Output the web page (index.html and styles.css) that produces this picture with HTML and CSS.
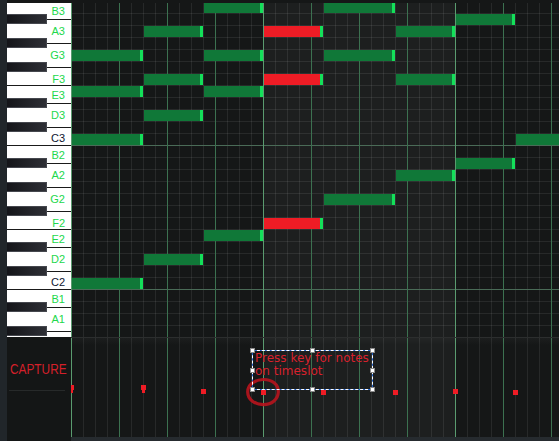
FILE: index.html
```html
<!DOCTYPE html>
<html>
<head>
<meta charset="utf-8">
<link rel="stylesheet" href="styles.css">
</head>
<body>
<div class="app">
  <div class="strip"></div>
  <div class="main">
    <div class="roll">
      <div class="keys">
        <div class="k first"><div class="lbl first-l">B3</div></div>
        <div class="k blk"><div class="bk"></div></div>
        <div class="k"><div class="lbl">A3</div></div>
        <div class="k blk"><div class="bk"></div></div>
        <div class="k"><div class="lbl">G3</div></div>
        <div class="k blk"><div class="bk"></div></div>
        <div class="k"><div class="lbl">F3</div></div>
        <div class="k sep"><div class="lbl low">E3</div></div>
        <div class="k blk"><div class="bk"></div></div>
        <div class="k"><div class="lbl">D3</div></div>
        <div class="k blk"><div class="bk"></div></div>
        <div class="k"><div class="lbl c">C3</div></div>
        <div class="k sep"><div class="lbl low">B2</div></div>
        <div class="k blk"><div class="bk"></div></div>
        <div class="k"><div class="lbl">A2</div></div>
        <div class="k blk"><div class="bk"></div></div>
        <div class="k"><div class="lbl">G2</div></div>
        <div class="k blk"><div class="bk"></div></div>
        <div class="k"><div class="lbl">F2</div></div>
        <div class="k sep"><div class="lbl low">E2</div></div>
        <div class="k blk"><div class="bk"></div></div>
        <div class="k"><div class="lbl">D2</div></div>
        <div class="k blk"><div class="bk"></div></div>
        <div class="k"><div class="lbl c">C2</div></div>
        <div class="k sep"><div class="lbl low">B1</div></div>
        <div class="k blk"><div class="bk"></div></div>
        <div class="k"><div class="lbl">A1</div></div>
        <div class="k blk"><div class="bk"></div></div>
      </div>
      <div class="grid">
        <div class="note" style="--x:0;--w:72;--r:11"></div>
        <div class="note" style="--x:0;--w:72;--r:7"></div>
        <div class="note" style="--x:0;--w:72;--r:4"></div>
        <div class="note" style="--x:0;--w:72;--r:23"></div>
        <div class="note" style="--x:72;--w:60;--r:9"></div>
        <div class="note" style="--x:72;--w:60;--r:6"></div>
        <div class="note" style="--x:72;--w:60;--r:2"></div>
        <div class="note" style="--x:72;--w:60;--r:21"></div>
        <div class="note" style="--x:132;--w:60;--r:7"></div>
        <div class="note" style="--x:132;--w:60;--r:4"></div>
        <div class="note" style="--x:132;--w:60;--r:0"></div>
        <div class="note" style="--x:132;--w:60;--r:19"></div>
        <div class="note red" style="--x:192;--w:60;--r:6"></div>
        <div class="note red" style="--x:192;--w:60;--r:2"></div>
        <div class="note red" style="--x:192;--w:60;--r:18"></div>
        <div class="note" style="--x:252;--w:72;--r:4"></div>
        <div class="note" style="--x:252;--w:72;--r:0"></div>
        <div class="note" style="--x:252;--w:72;--r:16"></div>
        <div class="note" style="--x:324;--w:60;--r:6"></div>
        <div class="note" style="--x:324;--w:60;--r:2"></div>
        <div class="note" style="--x:324;--w:60;--r:14"></div>
        <div class="note" style="--x:384;--w:60;--r:1"></div>
        <div class="note" style="--x:384;--w:60;--r:13"></div>
        <div class="note" style="--x:444;--w:72;--r:11"></div>
      </div>
    </div>
    <div class="events">
      <div class="ev-label">
        <div class="capture">CAPTURE</div>
        <div class="rule"></div>
      </div>
      <div class="ev-col">
        <div class="ev-grid">
          <div class="mk tall" style="--x:-2;--y:48"></div>
          <div class="mk tall" style="--x:70;--y:48"></div>
          <div class="mk" style="--x:130;--y:52"></div>
          <div class="mk" style="--x:190;--y:53"></div>
          <div class="mk" style="--x:250;--y:53"></div>
          <div class="mk" style="--x:322;--y:53"></div>
          <div class="mk" style="--x:382;--y:52"></div>
          <div class="mk" style="--x:442;--y:53"></div>
          <svg class="ring" width="40" height="34" viewBox="0 0 40 34">
            <path d="M20 4.5 C29 4.2 35.5 9.5 35.3 17 C35 24.5 28.5 29.8 20 29.6 C11.5 29.4 4.6 24.4 4.7 16.8 C4.8 9.6 11.6 4.8 20 4.5 Z" fill="none" stroke="#b8141d" stroke-width="3.2" stroke-opacity="0.9"/>
          </svg>
          <div class="sel">
            <div class="sel-text">Press key for notes<br>on timeslot</div>
            <span class="h tl"></span><span class="h tm"></span><span class="h tr"></span>
            <span class="h ml"></span><span class="h mr"></span>
            <span class="h bl"></span><span class="h bm"></span><span class="h br"></span>
          </div>
        </div>
        <div class="ev-bottom"></div>
      </div>
    </div>
  </div>
</div>
</body>
</html>
```

FILE: styles.css
```css
html, body {
  margin: 0;
  padding: 0;
  background: #151717;
  overflow: hidden;
}

.app {
  width: 559px;
  height: 441px;
  display: flex;
  font-family: "Liberation Sans", Arial, sans-serif;
}

.strip {
  width: 7px;
  flex: none;
  background: #21262a;
}

.main {
  flex: 1;
  display: flex;
  flex-direction: column;
}

.roll {
  height: 337px;
  flex: none;
  display: flex;
  padding-top: 3px;
  box-sizing: border-box;
  background: #151717;
}

/* keyboard */
.keys {
  width: 64px;
  flex: none;
  display: flex;
  flex-direction: column;
  background: #ffffff;
}

.k {
  height: 12px;
  flex: none;
}

.k.first {
  height: 10px;
}

.k.blk {
  background: linear-gradient(#1a1a1a, #1a1a1a) 0 6px / 100% 1px no-repeat;
}

.k.sep {
  background: linear-gradient(#1a1a1a, #1a1a1a) 0 0 / 100% 1px no-repeat;
}

.bk {
  width: 40px;
  height: 10px;
  margin-top: 1px;
  box-sizing: border-box;
  border: 1px solid #45474e;
  border-left: none;
  background: linear-gradient(to right, #141519, #26272d 70%, #2e2f35);
}

.lbl {
  font-size: 11px;
  line-height: 12px;
  color: #22d84c;
  text-align: right;
  padding-right: 6px;
  white-space: nowrap;
}

.lbl.low {
  margin-top: 4px;
}

.lbl.first-l {
  margin-top: 2px;
}

.lbl.c {
  margin-top: -1px;
  color: #0d1530;
}

/* note grid */
.grid {
  flex: 1;
  position: relative;
  overflow: hidden;
  background-color: #151717;
  background-image:
    linear-gradient(to right, #5a9b6f 0 1px, transparent 1px),
    linear-gradient(to right, #3c7150 0 1px, transparent 1px),
    linear-gradient(to bottom, #4a6b57 0 1px, transparent 1px),
    linear-gradient(to bottom, rgba(255,255,255,0.08) 0 1px, transparent 1px),
    linear-gradient(to right, rgba(255,255,255,0.08) 0 1px, transparent 1px),
    linear-gradient(to right, transparent 0 192px, rgba(255,255,255,0.035) 192px 384px);
  background-size:
    192px 100%,
    48px 100%,
    100% 144px,
    100% 12px,
    12px 100%,
    384px 100%;
  background-position:
    0 0,
    0 0,
    0 142px,
    0 10px,
    0 0,
    0 0;
}

.note {
  position: absolute;
  left: calc(var(--x) * 1px + 1px);
  width: calc(var(--w) * 1px - 1px);
  top: calc(var(--r) * 12px - 1px);
  height: 11px;
  background: linear-gradient(to left, #14e05a 0 3px, #107838 3px);
}

.note.red {
  background: linear-gradient(to left, #14e05a 0 3px, #ee1c25 3px);
}

/* event editor */
.events {
  flex: 1;
  display: flex;
}

.ev-label {
  width: 64px;
  flex: none;
  background: #141616;
}

.capture {
  margin-top: 25px;
  padding-left: 3px;
  font-size: 15px;
  line-height: 14px;
  color: #d5202a;
  white-space: nowrap;
  transform: scaleX(0.79);
  transform-origin: 3px 0;
}

.rule {
  margin: 14px 0 0 2px;
  width: 56px;
  height: 1px;
  background: #272a2a;
}

.ev-col {
  flex: 1;
  display: flex;
  flex-direction: column;
}

.ev-grid {
  height: 100px;
  flex: none;
  position: relative;
  z-index: 0;
  overflow: hidden;
  background-color: #151717;
  background-image:
    linear-gradient(#2c2e2e, #2c2e2e),
    linear-gradient(to bottom, rgba(255,255,255,0.035), transparent 8px),
    linear-gradient(to right, #5a9b6f 0 1px, transparent 1px),
    linear-gradient(to right, #3c7150 0 1px, transparent 1px),
    linear-gradient(to right, rgba(255,255,255,0.08) 0 1px, transparent 1px),
    linear-gradient(to right, transparent 0 192px, rgba(255,255,255,0.035) 192px 384px);
  background-size:
    100% 1px,
    100% 100%,
    192px 100%,
    48px 100%,
    12px 100%,
    384px 100%;
  background-repeat: no-repeat, no-repeat, repeat, repeat, repeat, repeat;
}

.ev-bottom {
  flex: 1;
  background: #262b2f;
}

.mk {
  position: absolute;
  left: calc(var(--x) * 1px);
  top: calc(var(--y) * 1px);
  width: 5px;
  height: 5px;
  background: #ee1c25;
}

.mk.tall::after {
  content: "";
  position: absolute;
  left: 1px;
  top: 5px;
  width: 3px;
  height: 3px;
  background: #ee1c25;
}

.ring {
  position: absolute;
  left: 172px;
  top: 38px;
}

.sel {
  position: absolute;
  left: 181px;
  top: 13px;
  width: 121px;
  height: 40px;
  box-sizing: border-box;
  border: 1px dashed #ffffff;
}

.sel::before {
  content: "";
  position: absolute;
  inset: -1px;
  border: 1px solid #1f5fc8;
  z-index: -1;
}

.sel-text {
  padding: 1px 0 0 2px;
  font-family: "DejaVu Sans", Verdana, sans-serif;
  font-size: 12px;
  line-height: 13px;
  color: #d8212d;
  white-space: nowrap;
}

.h {
  position: absolute;
  width: 5px;
  height: 5px;
  box-sizing: border-box;
  background: #ffffff;
  border: 1px solid #8a8a8a;
}

.tl { left: -3px; top: -3px; }
.tm { left: 50%; margin-left: -3px; top: -3px; }
.tr { right: -3px; top: -3px; }
.ml { left: -3px; top: 50%; margin-top: -2px; }
.mr { right: -3px; top: 50%; margin-top: -2px; }
.bl { left: -3px; bottom: -3px; }
.bm { left: 50%; margin-left: -3px; bottom: -3px; }
.br { right: -3px; bottom: -3px; }
```
